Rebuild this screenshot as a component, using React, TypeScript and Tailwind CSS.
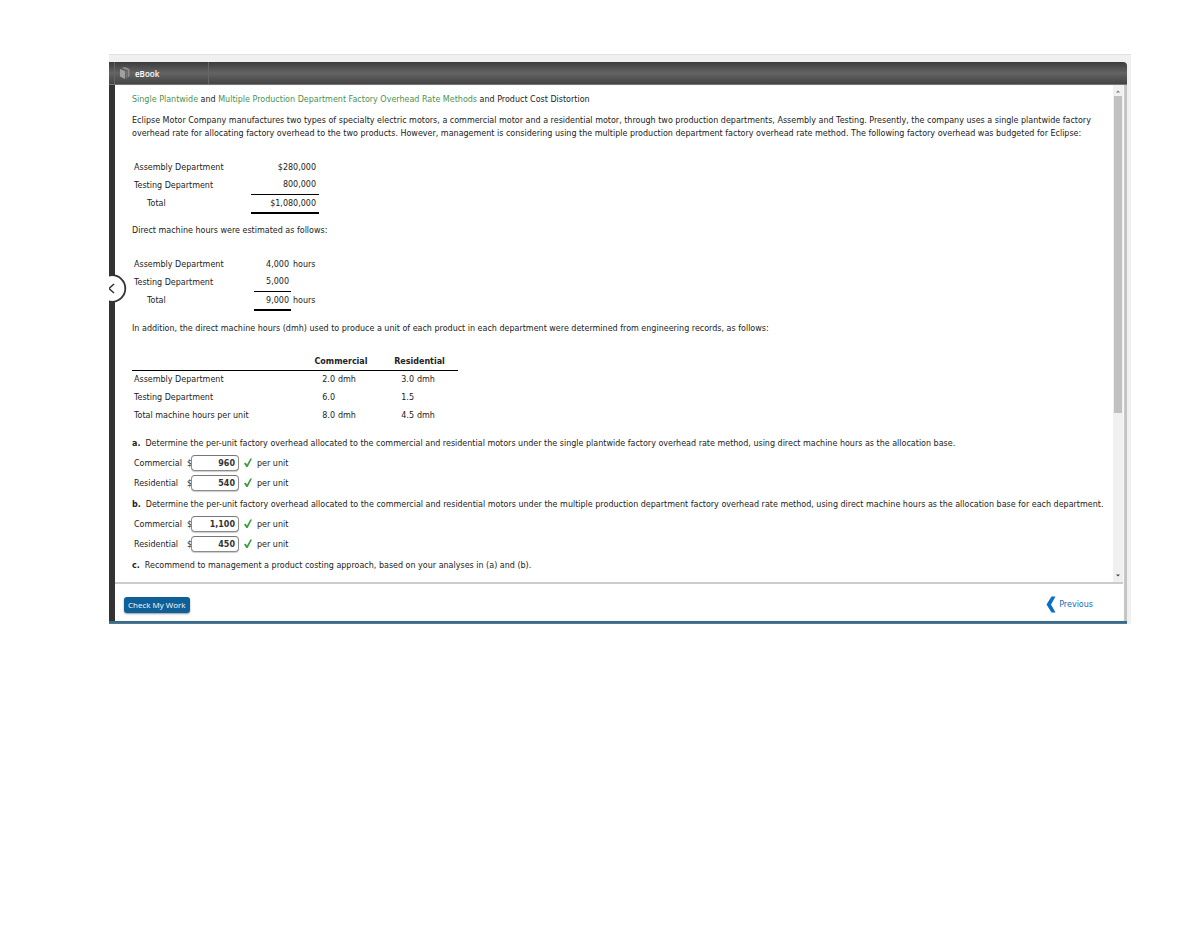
import type { ReactNode } from "react";

const cell = "p-0 font-normal text-left";

function EbookIcon() {
    return (
        <svg width="10" height="12" viewBox="0 0 10 12" aria-hidden="true">
            <path d="M0 2 5 4v8L0 9.500z" fill="#a0a0a0" />
            <path d="M1.500 1 5 0l4.500 2v7.500L8 10V3.500z" fill="#8c8c8c" />
            <path d="M5.800 4 7.500 3.500v7l-1.700.8z" fill="#757575" />
        </svg>
    );
}

function CheckMark() {
    return (
        <svg className="mx-[5px]" width="8" height="10" viewBox="0 0 8 10" role="img" aria-label="Correct">
            <path d="M0 5.500 1.500 4.500 3 6.500 6.300.5 8 .5 3.700 9H2.300z" fill="#3a9e3f" />
        </svg>
    );
}

function Answer({ id, label, value }: { id: string; label: string; value: string }) {
    return (
        <div className="flex items-center h-5 pl-0.5">
            <label htmlFor={id} className="w-[53px]">{label}</label>
            <span className="w-1 overflow-hidden">$</span>
            <input
                id={id}
                defaultValue={value}
                className="w-12 h-4 px-[3px] border border-[#8c8c8c] border-t-[#777] rounded-sm bg-white text-right font-bold text-[#333] shadow-[0_1px_1px_#ccc]"
            />
            <CheckMark />
            <span>per unit</span>
        </div>
    );
}

function Question({ letter, children }: { letter: string; children: ReactNode }) {
    return (
        <p className="leading-[14px]">
            <b className="mr-[5px]">{letter}.</b>
            {children}
        </p>
    );
}

function OverheadTable() {
    return (
        <table className="mt-[18px] border-collapse">
            <tbody>
                <tr className="h-[18px]">
                    <th scope="row" className={`${cell} w-[119px] pl-0.5`}>Assembly Department</th>
                    <td className="w-[68px] p-0 pr-[3px] text-right">$280,000</td>
                </tr>
                <tr className="h-[18px]">
                    <th scope="row" className={`${cell} pl-0.5`}>Testing Department</th>
                    <td className="p-0 pr-[3px] text-right border-b border-black">800,000</td>
                </tr>
                <tr className="h-[19px]">
                    <th scope="row" className={`${cell} pl-[15px]`}>Total</th>
                    <td className="p-0 pr-[3px] text-right border-b-2 border-black">$1,080,000</td>
                </tr>
            </tbody>
        </table>
    );
}

function HoursTable() {
    return (
        <table className="mt-[18px] border-collapse">
            <tbody>
                <tr className="h-[18px]">
                    <th scope="row" className={`${cell} w-[122px] pl-0.5`}>Assembly Department</th>
                    <td className="w-[37px] p-0 pr-0.5 text-right">4,000</td>
                    <td className="p-0 pl-0.5">hours</td>
                </tr>
                <tr className="h-[18px]">
                    <th scope="row" className={`${cell} pl-0.5`}>Testing Department</th>
                    <td className="p-0 pr-0.5 text-right border-b border-black">5,000</td>
                    <td />
                </tr>
                <tr className="h-[19px]">
                    <th scope="row" className={`${cell} pl-[15px]`}>Total</th>
                    <td className="p-0 pr-0.5 text-right border-b-2 border-black">9,000</td>
                    <td className="p-0 pl-0.5">hours</td>
                </tr>
            </tbody>
        </table>
    );
}

const unitRows = [
    { name: "Assembly Department", commercial: "2.0", residential: "3.0", unit: "dmh" },
    { name: "Testing Department", commercial: "6.0", residential: "1.5", unit: "" },
    { name: "Total machine hours per unit", commercial: "8.0", residential: "4.5", unit: "dmh" },
];

function UnitTable() {
    return (
        <table className="mt-[18px] border-collapse">
            <thead>
                <tr className="h-[17px] border-b border-black">
                    <th className="w-[169px] p-0" />
                    <th scope="col" colSpan={2} className="w-20 p-0 font-bold">Commercial</th>
                    <th scope="col" colSpan={2} className="w-[77px] p-0 font-bold">Residential</th>
                </tr>
            </thead>
            <tbody>
                {unitRows.map((row) => (
                    <tr key={row.name} className="h-[18px]">
                        <th scope="row" className={`${cell} pl-0.5`}>{row.name}</th>
                        <td className="w-[34px] p-0 text-right">{row.commercial}</td>
                        <td className="w-[46px] p-0 pl-[3px]">{row.unit}</td>
                        <td className="w-[33px] p-0 text-right">{row.residential}</td>
                        <td className="w-11 p-0 pl-[3px]">{row.unit}</td>
                    </tr>
                ))}
            </tbody>
        </table>
    );
}

function Scrollbar() {
    return (
        <div className="flex flex-col w-[10px] shrink-0 bg-[#f0f0f0]">
            <button aria-label="Scroll up" className="flex h-[11px] pt-0.5 items-center justify-center">
                <svg width="4" height="3" viewBox="0 0 4 3"><path d="M0 2.500 2 .5l2 2z" fill="#777" /></svg>
            </button>
            <div className="flex-1 px-px">
                <div className="h-[67%] bg-[#c1c1c1]" />
            </div>
            <button aria-label="Scroll down" className="flex h-[13px] items-center justify-center">
                <svg width="4" height="3" viewBox="0 0 4 3"><path d="M0 .5h4l-2 2z" fill="#444" /></svg>
            </button>
        </div>
    );
}

export default function App() {
    return (
        <main className="pl-[109px] pr-[69px] pt-[54px] bg-white font-['DejaVu_Sans',Verdana,sans-serif] text-[8px] leading-[13px] text-[#222]">
            <div className="bg-[#f0f0f0] border-t border-[#e2e2e2] pt-[7px] pr-1">
                <header className="flex h-[23px] bg-linear-to-b from-[#3c3c3c] via-[#646464] to-[#444] border-b border-[#777] rounded-tr-sm">
                    <button className="flex items-center gap-[5px] w-[95px] ml-[5px] pl-[5px] border-x border-[#666] text-white font-['Open_Sans',sans-serif] font-semibold">
                        <EbookIcon />
                        eBook
                    </button>
                </header>
                <div className="relative flex bg-white border-l-[6px] border-[#333] shadow-[inset_-3px_0_1px_#c4c4c4]">
                    <button aria-label="Collapse panel" className="absolute -left-[6px] top-[189px] w-[18px] h-[29px] overflow-hidden">
                        <svg width="18" height="29" viewBox="0 0 18 29">
                            <circle cx="3" cy="14.500" r="13.300" fill="#fff" stroke="#333" strokeWidth="1.800" />
                            <path d="M5 10 0 14.500 5 19" fill="none" stroke="#333" strokeWidth="1.500" />
                        </svg>
                    </button>
                    <div className="flex-1 min-w-0 mr-1">
                        <div className="flex border-b-2 border-[#ccc]">
                            <section className="flex-1 min-w-0 pl-[17px] pt-2 pb-[9px]">
                                <h1 className="leading-[14px]">
                                    <a href="#single" className="text-[#4a9250]">Single Plantwide</a> and{" "}
                                    <a href="#multiple" className="text-[#4a9250]">Multiple Production Department Factory Overhead Rate Methods</a> and Product Cost Distortion
                                </h1>
                                <p className="mt-[7px]">
                                    Eclipse Motor Company manufactures two types of specialty electric motors, a commercial motor and a residential motor, through two production departments, Assembly and Testing. Presently, the company uses a single plantwide factory overhead rate for allocating factory overhead to the two products. However, management is considering using the multiple production department factory overhead rate method. The following factory overhead was budgeted for Eclipse:
                                </p>
                                <OverheadTable />
                                <p className="mt-[10px]">Direct machine hours were estimated as follows:</p>
                                <HoursTable />
                                <p className="mt-[11px]">
                                    In addition, the direct machine hours (dmh) used to produce a unit of each product in each department were determined from engineering records, as follows:
                                </p>
                                <UnitTable />
                                <div className="mt-[13px]">
                                    <Question letter="a">
                                        Determine the per-unit factory overhead allocated to the commercial and residential motors under the single plantwide factory overhead rate method, using direct machine hours as the allocation base.
                                    </Question>
                                    <div className="mt-0.5 mb-[5px]">
                                        <Answer id="a-commercial" label="Commercial" value="960" />
                                        <Answer id="a-residential" label="Residential" value="540" />
                                    </div>
                                    <Question letter="b">
                                        Determine the per-unit factory overhead allocated to the commercial and residential motors under the multiple production department factory overhead rate method, using direct machine hours as the allocation base for each department.
                                    </Question>
                                    <div className="mt-0.5 mb-[5px]">
                                        <Answer id="b-commercial" label="Commercial" value="1,100" />
                                        <Answer id="b-residential" label="Residential" value="450" />
                                    </div>
                                    <Question letter="c">
                                        Recommend to management a product costing approach, based on your analyses in (a) and (b).
                                    </Question>
                                </div>
                            </section>
                            <Scrollbar />
                        </div>
                        <footer className="flex items-center justify-between h-[37px] pl-[9px] pr-[30px] pt-1">
                            <button className="h-4 px-1 rounded-[3px] bg-[#0f6099] text-white font-['Open_Sans',sans-serif] font-medium shadow-[0_1px_2px_#999]">
                                Check My Work
                            </button>
                            <button className="flex items-center gap-[3px] text-[#0b6fc6]">
                                <svg width="10" height="17" viewBox="0 0 10 17" aria-hidden="true">
                                    <path d="M5.500.5h4L5 8.500l4.500 8h-4L.5 8.500z" fill="#0b6fc6" />
                                </svg>
                                Previous
                            </button>
                        </footer>
                    </div>
                </div>
                <div className="h-[3px] bg-[#2f6f95] border-b border-[#5f7380]" />
            </div>
        </main>
    );
}
